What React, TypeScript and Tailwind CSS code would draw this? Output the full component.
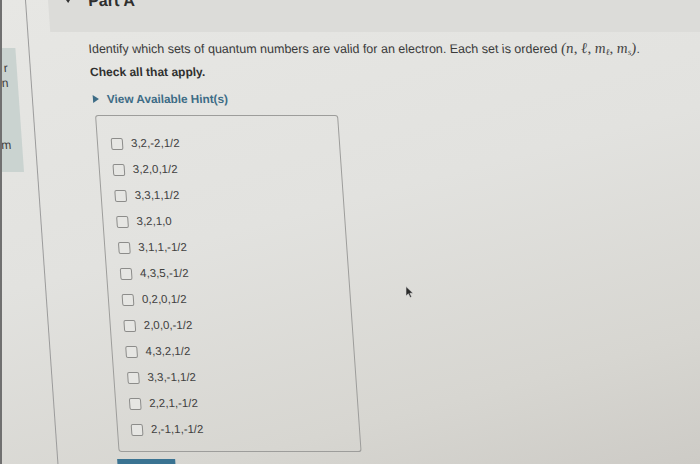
import React from "react";

const items = [
  "3,2,-2,1/2",
  "3,2,0,1/2",
  "3,3,1,1/2",
  "3,2,1,0",
  "3,1,1,-1/2",
  "4,3,5,-1/2",
  "0,2,0,1/2",
  "2,0,0,-1/2",
  "4,3,2,1/2",
  "3,3,-1,1/2",
  "2,2,1,-1/2",
  "2,-1,1,-1/2",
];

export default function App() {
  return (
    <div
      className="relative w-[700px] h-[464px] overflow-hidden flex bg-[linear-gradient(165deg,#e7e7e4_0%,#e2e2df_45%,#d7d6d1_80%,#cdcbc6_100%)]"
      style={{ fontFamily: '"Liberation Sans", Arial, sans-serif' }}
    >
      <div className="w-[2px] h-full shrink-0" />
      <div className="flex-1 h-full flex origin-top-left skew-x-[4deg]">
        {/* sidebar */}
        <div className="w-[23px] shrink-0 flex flex-col pt-[48px]">
          <div className="-ml-[12px] h-[124px] w-[22px] shrink-0 bg-[#cad3d0] flex flex-col items-start text-[12px] text-[#3e3e3e] leading-none">
            <span className="mt-[14px] ml-[9px]">r</span>
            <span className="mt-[3px] ml-[6px]">n</span>
            <span className="mt-[50px] ml-[1px]">m</span>
          </div>
        </div>
        <div className="w-px h-full bg-[#9b9b9b] shrink-0" />
        {/* main */}
        <div className="flex-1 flex flex-col pl-[22px]">
          <div className="h-[32px] shrink-0 bg-[#dcdcd9] relative">
            <div className="absolute left-[16px] -top-[3px] w-0 h-0 border-l-[4px] border-r-[4px] border-t-[6px] border-l-transparent border-r-transparent border-t-[#333]" />
            <span className="absolute left-[40px] -top-[11px] leading-[24px] text-[16px] font-bold text-[#2e2e2e]">Part A</span>
          </div>
          <div className="pl-[37px] flex flex-col shrink-0">
            <p className="mt-[8px] h-[16px] leading-[16px] text-[12.5px] text-[#3a3a3a] whitespace-nowrap">
              Identify which sets of quantum numbers are valid for an electron. Each set is ordered{" "}
              <span
                className="italic text-[15px] text-[#444]"
                style={{ fontFamily: '"Liberation Serif", "Times New Roman", serif' }}
              >
                (n, ℓ, m<sub className="text-[9px]">ℓ</sub>, m<sub className="text-[9px]">s</sub>)
              </span>
              .
            </p>
            <p className="mt-[8px] h-[16px] leading-[16px] text-[12px] font-bold text-[#303030]">
              Check all that apply.
            </p>
            <div className="mt-[11px] h-[16px] flex items-center gap-[8px] text-[11.75px] font-bold text-[#3d6c86]">
              <div className="ml-[1px] w-0 h-0 border-t-[4px] border-b-[4px] border-l-[6px] border-t-transparent border-b-transparent border-l-[#3d6c86]" />
              <span>View Available Hint(s)</span>
            </div>
            <div className="mt-[8px] ml-[2px] w-[243px] h-[337px] shrink-0 border border-[#9d9d9b] rounded-[3px] pl-[13px] pt-[21px] flex flex-col gap-[12px]">
              {items.map((t) => (
                <div key={t} className="flex items-center h-[14px] gap-[8px]">
                  <div className="w-[12px] h-[12px] border border-[#8c8c8a] rounded-[2px] bg-[#e6e6e3]" />
                  <span className="text-[11.5px] text-[#404040] leading-none">{t}</span>
                </div>
              ))}
            </div>
            <div className="mt-[7px] w-[58px] h-[20px] shrink-0 bg-[#3a7392]" />
          </div>
        </div>
      </div>
      {/* window edge */}
      <div className="absolute left-0 top-0 w-[2px] h-full bg-[#707070]" />
      {/* mouse cursor */}
      <svg className="absolute left-[405px] top-[286px]" width="9" height="12" viewBox="0 0 9 12">
        <path d="M1 0.5 L1 10 L3.4 7.8 L5.2 11.5 L6.6 10.8 L4.9 7.3 L8 7.2 Z" fill="#2b2b2b" stroke="#d8d8d8" strokeWidth="0.6" />
      </svg>
    </div>
  );
}
